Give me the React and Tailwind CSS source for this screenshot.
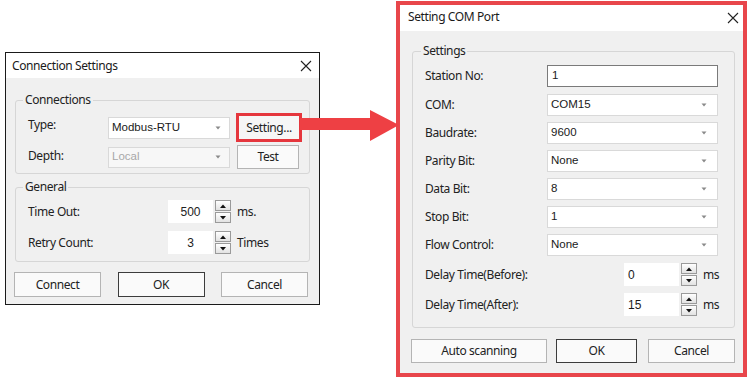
import React from "react";

function CloseIcon() {
  return (
    <svg width="12" height="12" viewBox="0 0 12 12" className="block">
      <path d="M1 1 L11 11 M11 1 L1 11" stroke="#222" strokeWidth="1.1" fill="none" />
    </svg>
  );
}

function Caret() {
  return (
    <svg width="6" height="4" viewBox="0 0 6 4" className="block">
      <path d="M0.5 0.5 L5.5 0.5 L3 3.5 Z" fill="#8a8a8a" />
    </svg>
  );
}

function Select({ value, disabled, className }) {
  return (
    <div
      className={`flex items-center justify-between border border-[#d9d9d9] pl-[3px] pr-[8px] font-['Liberation_Sans',sans-serif] text-[11.5px] tracking-normal ${
        disabled ? "bg-[#f7f7f7] text-[#a8a8a8]" : "bg-white text-[#1a1a1a]"
      } ${className}`}
    >
      <span>{value}</span>
      <Caret />
    </div>
  );
}

function Spinner() {
  return (
    <div className="flex flex-col gap-[1px] w-[16px]">
      <div className="h-[11px] border border-[#9a9a9a] bg-gradient-to-b from-white to-[#e2e2e2] flex items-center justify-center">
        <svg width="6" height="4" viewBox="0 0 6 4"><path d="M0 4 L3 0.5 L6 4 Z" fill="#111" /></svg>
      </div>
      <div className="h-[11px] border border-[#9a9a9a] bg-gradient-to-b from-white to-[#e2e2e2] flex items-center justify-center">
        <svg width="6" height="4" viewBox="0 0 6 4"><path d="M0 0 L6 0 L3 3.5 Z" fill="#111" /></svg>
      </div>
    </div>
  );
}

function Btn({ children, primary, className }) {
  return (
    <div
      className={`flex items-center justify-center border ${
        primary ? "border-[#3c3c3c]" : "border-[#b4b4b4]"
      } bg-[#fafafa] text-[#222] ${className}`}
    >
      {children}
    </div>
  );
}

function ConnectionSettings() {
  return (
    <div className="ml-[5px] mt-[52px] w-[315px] h-[253px] border border-[#1a1a1a] flex flex-col shrink-0">
      <div className="h-[25px] bg-white flex items-center justify-between pl-[6px] pr-[7px] text-[#1a1a1a]">
        <span>Connection Settings</span>
        <CloseIcon />
      </div>
      <div className="flex-1 bg-[#f0f0f0] px-[9px] pt-[22px]">
        {/* Connections */}
        <div className="border border-[#d6d6d6] rounded-[3px] pb-[4px]">
          <div className="-mt-[9px] ml-[7px] w-fit px-[2px] bg-[#f0f0f0] leading-[16px] text-[#222]">
            Connections
          </div>
          <div className="mt-[5px] h-[29px] flex items-center">
            <span className="pl-[12px] w-[92px] -mt-[5px] text-[#222]">Type:</span>
            <Select value="Modbus-RTU" className="w-[122px] h-[22px]" />
            <div className="ml-[6px] w-[66px] h-[29px] border-[3px] border-[#e5363d] bg-[#f6f6f6] flex items-center justify-center text-[#222]">
              Setting...
            </div>
          </div>
          <div className="mt-[3px] h-[24px] flex items-center">
            <span className="pl-[12px] w-[92px] -mt-[3px] text-[#222]">Depth:</span>
            <Select value="Local" disabled className="w-[122px] h-[21px]" />
            <Btn className="ml-[7px] w-[62px] h-[24px]">Test</Btn>
          </div>
        </div>

        {/* General */}
        <div className="mt-[13px] border border-[#d6d6d6] rounded-[3px] pb-[7px]">
          <div className="-mt-[9px] ml-[7px] w-fit px-[2px] bg-[#f0f0f0] leading-[16px] text-[#222]">
            General
          </div>
          <div className="mt-[5px] h-[23px] flex items-center">
            <span className="pl-[12px] w-[152px] text-[#222]">Time Out:</span>
            <div className="w-[45px] h-[23px] bg-white flex items-center justify-center font-['Liberation_Sans',sans-serif] text-[12px] tracking-normal text-[#222]">
              500
            </div>
            <div className="ml-[2px]">
              <Spinner />
            </div>
            <span className="ml-[6px] text-[#222]">ms.</span>
          </div>
          <div className="mt-[8px] h-[23px] flex items-center">
            <span className="pl-[12px] w-[152px] text-[#222]">Retry Count:</span>
            <div className="w-[45px] h-[23px] bg-white flex items-center justify-center font-['Liberation_Sans',sans-serif] text-[12px] tracking-normal text-[#222]">
              3
            </div>
            <div className="ml-[2px]">
              <Spinner />
            </div>
            <span className="ml-[6px] text-[#222]">Times</span>
          </div>
        </div>

        <div className="mt-[10px] -ml-[1px] w-[294px] flex justify-between">
          <Btn className="w-[87px] h-[25px]">Connect</Btn>
          <Btn primary className="w-[87px] h-[25px]">OK</Btn>
          <Btn className="w-[87px] h-[25px]">Cancel</Btn>
        </div>
      </div>
    </div>
  );
}

const comRows = [
  ["COM:", "COM15"],
  ["Baudrate:", "9600"],
  ["Parity Bit:", "None"],
  ["Data Bit:", "8"],
  ["Stop Bit:", "1"],
  ["Flow Control:", "None"],
];

function SettingComPort() {
  return (
    <div className="ml-[76px] mt-[1px] w-[351px] h-[376px] border-[4px] border-[#e8464b] flex flex-col shrink-0">
      <div className="h-[26px] bg-white flex items-center justify-between pl-[8px] pr-[4px] text-[#1a1a1a]">
        <span className="-mt-[2px]">Setting COM Port</span>
        <CloseIcon />
      </div>
      <div className="flex-1 bg-[#f0f0f0] pl-[12px] pt-[20px]">
        <div className="w-[323px] border border-[#d6d6d6] rounded-[3px] pb-[11px]">
          <div className="-mt-[9px] ml-[8px] w-fit px-[2px] bg-[#f0f0f0] leading-[16px] text-[#222]">
            Settings
          </div>
          <div className="mt-[6px] flex flex-col gap-[6px]">
            <div className="h-[22px] mb-[1px] flex items-center">
              <span className="pl-[12px] w-[134px] text-[#222]">Station No:</span>
              <div className="w-[171px] h-[22px] bg-white border border-[#7a7a7a] pl-[4px] flex items-center font-['Liberation_Sans',sans-serif] text-[11.5px] tracking-normal text-[#1a1a1a]">
                1
              </div>
            </div>
            {comRows.map(([label, value]) => (
              <div key={label} className="h-[22px] flex items-center">
                <span className="pl-[12px] w-[134px] text-[#222]">{label}</span>
                <Select value={value} className="w-[171px] h-[22px] !pr-[10px]" />
              </div>
            ))}
          </div>
          <div className="mt-[7px] h-[23px] flex items-center">
            <span className="pl-[12px] w-[211px] text-[#222]">Delay Time(Before):</span>
            <div className="w-[55px] h-[23px] bg-white pl-[4px] flex items-center font-['Liberation_Sans',sans-serif] text-[12px] tracking-normal text-[#1a1a1a]">
              0
            </div>
            <div className="ml-[2px]">
              <Spinner />
            </div>
            <span className="ml-[6px] text-[#222]">ms</span>
          </div>
          <div className="mt-[7px] h-[23px] flex items-center">
            <span className="pl-[12px] w-[211px] text-[#222]">Delay Time(After):</span>
            <div className="w-[55px] h-[23px] bg-white pl-[4px] flex items-center font-['Liberation_Sans',sans-serif] text-[12px] tracking-normal text-[#1a1a1a]">
              15
            </div>
            <div className="ml-[2px]">
              <Spinner />
            </div>
            <span className="ml-[6px] text-[#222]">ms</span>
          </div>
        </div>
        <div className="mt-[11px] -ml-[1px] flex">
          <Btn className="w-[136px] h-[24px]">Auto scanning</Btn>
          <Btn primary className="ml-[9px] w-[81px] h-[24px]">OK</Btn>
          <Btn className="ml-[11px] w-[87px] h-[24px]">Cancel</Btn>
        </div>
      </div>
    </div>
  );
}

export default function App() {
  return (
    <div className="relative w-[749px] h-[378px] bg-white overflow-hidden flex items-start font-['Noto_Sans',sans-serif] text-[12px] tracking-[-0.4px]">
      <ConnectionSettings />
      <SettingComPort />
      {/* arrow pointing from Setting... to the COM port dialog */}
      <svg
        className="absolute left-[300px] top-[108px]"
        width="100"
        height="36"
        viewBox="0 0 100 36"
      >
        <path d="M0 10 L70 10 L70 2 L99 17 L70 33 L70 22 L0 22 Z" fill="#ee4044" />
      </svg>
    </div>
  );
}
